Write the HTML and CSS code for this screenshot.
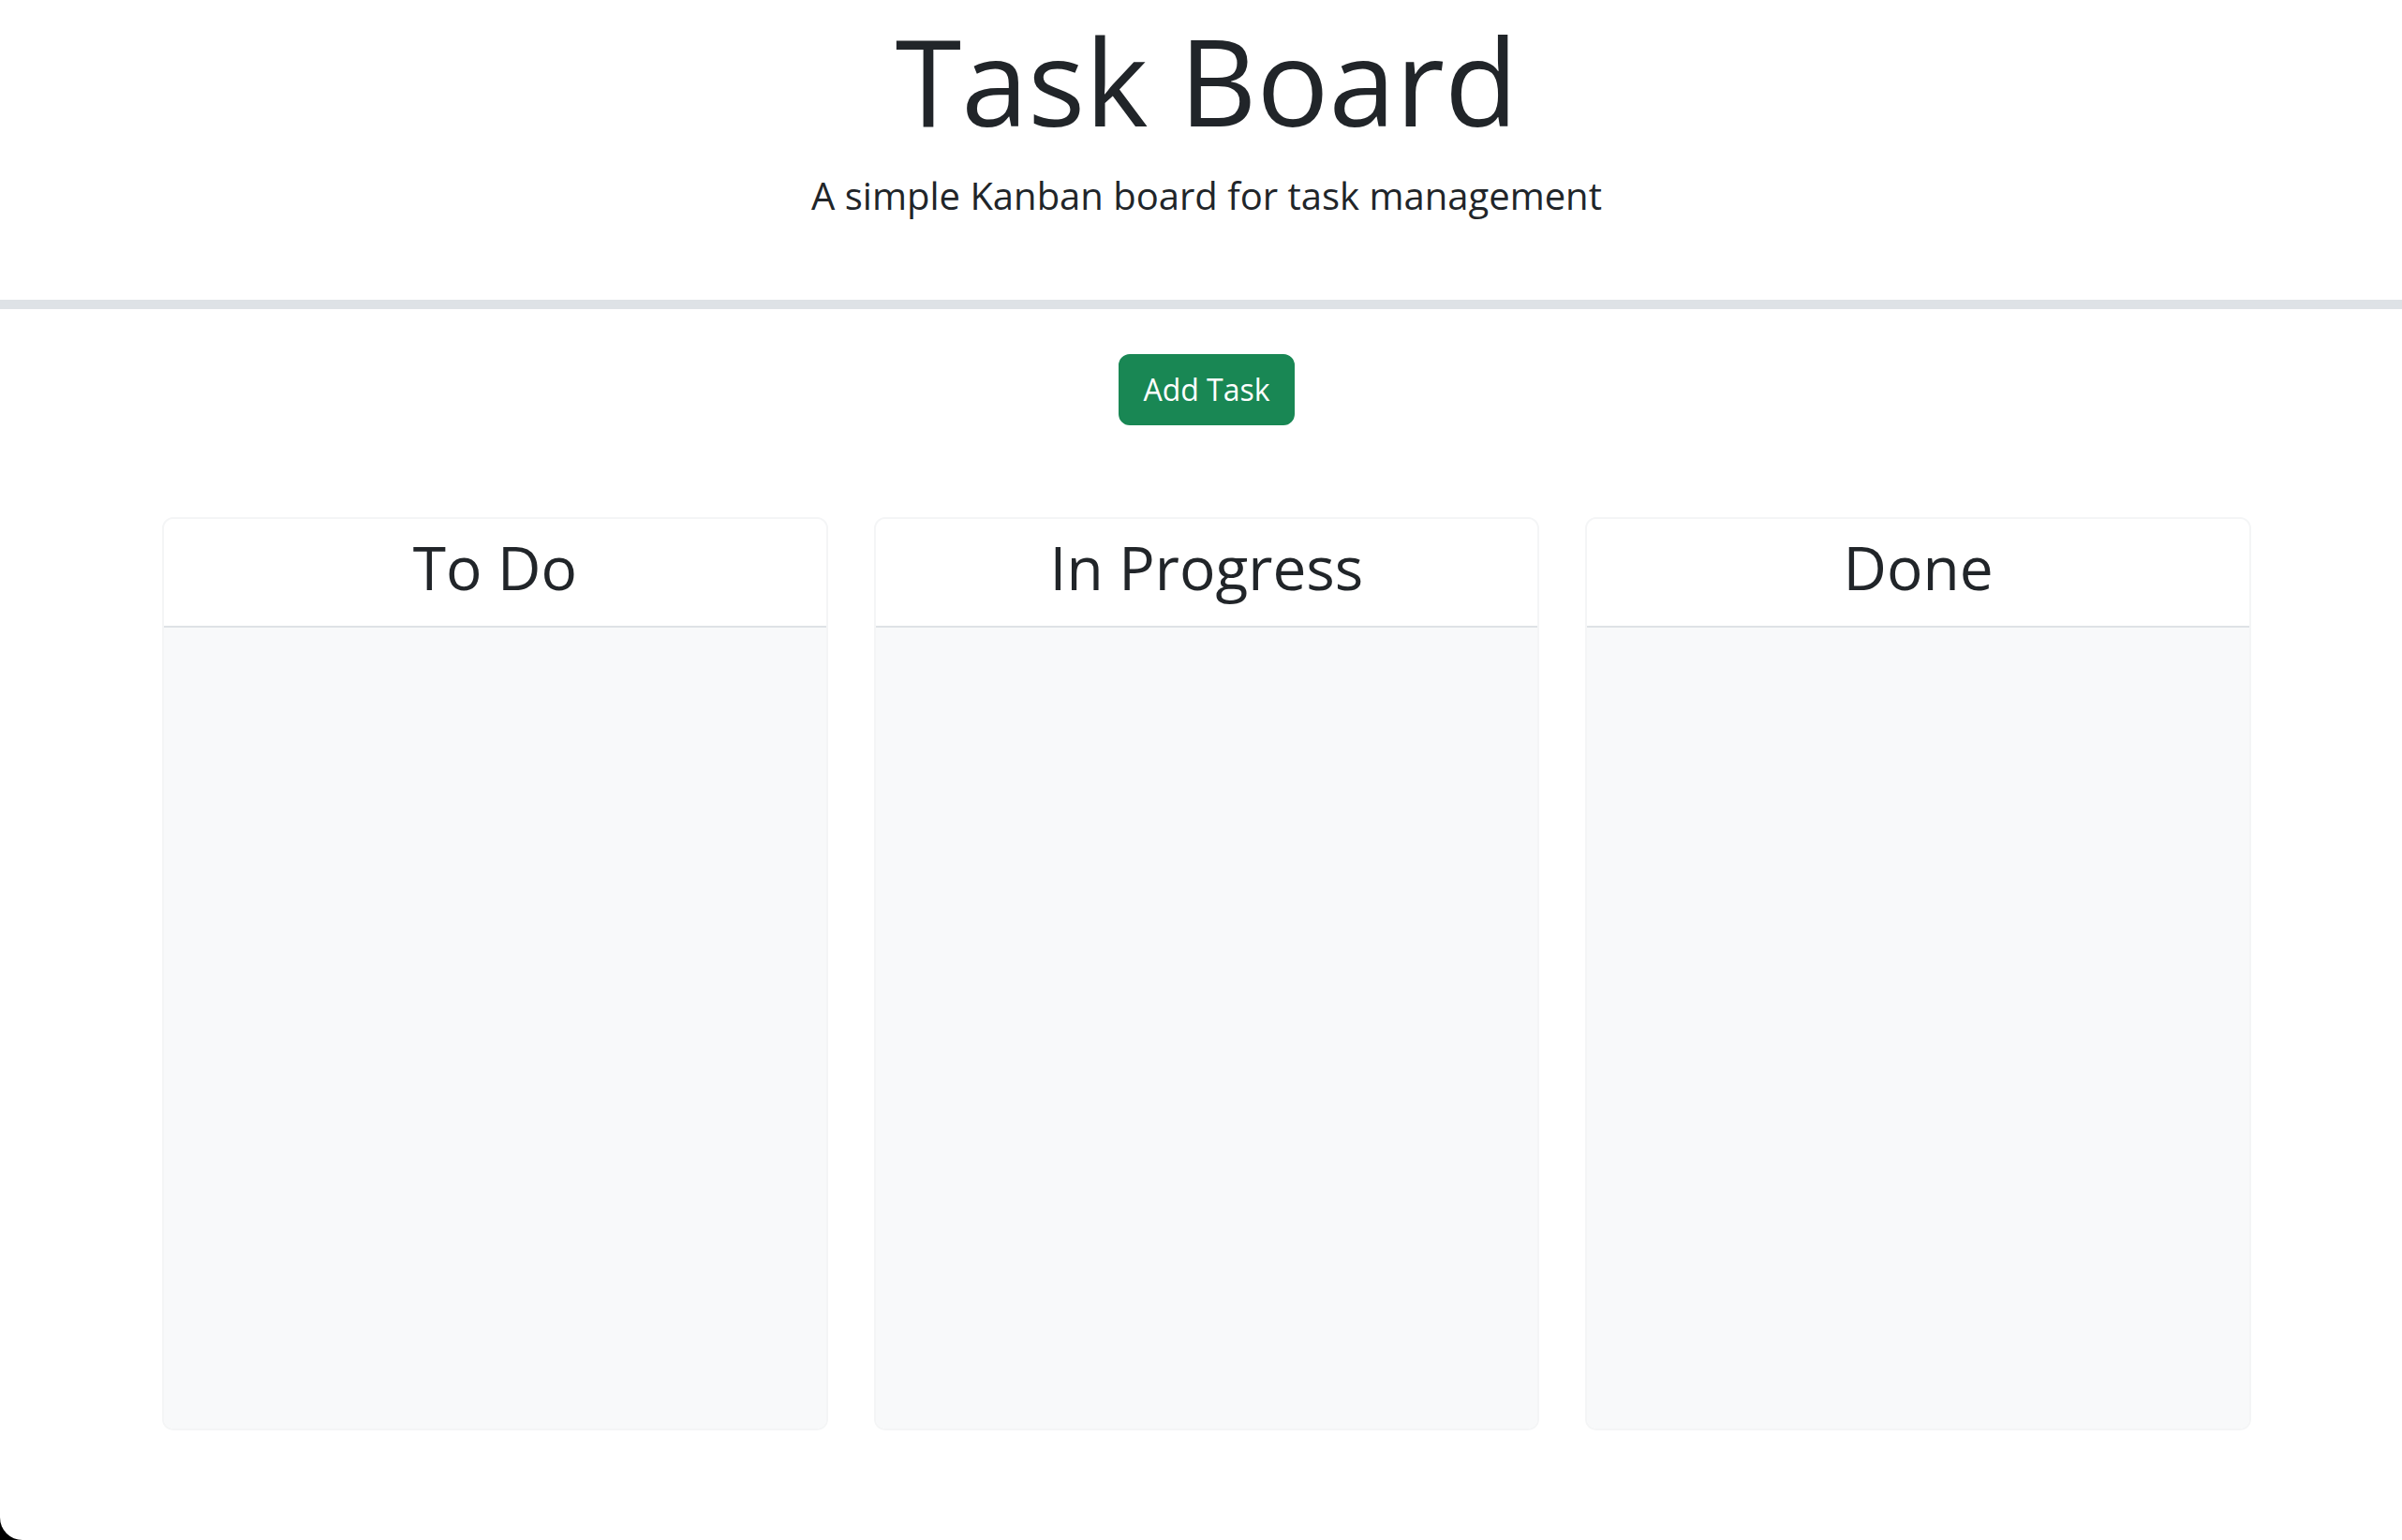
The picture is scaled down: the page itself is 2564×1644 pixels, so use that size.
FILE: index.html
```html
<!DOCTYPE html>
<html lang="en">
<head>
  <meta charset="UTF-8">
  <title>Task Board</title>
  <meta name="viewport" content="width=device-width, initial-scale=1.0">
  <link rel="stylesheet" href="styles.css">
</head>
<body>

  <header class="page-header">
    <h1>Task Board</h1>
    <p class="lead">A simple Kanban board for task management</p>
  </header>

  <main class="board-wrap">
    <div class="actions">
      <button class="btn-add" onclick="addTask()">Add Task</button>
    </div>

    <div class="board">
      <section class="column">
        <div class="column-header"><h2>To Do</h2></div>
        <div class="column-body" id="todo"></div>
      </section>
      <section class="column">
        <div class="column-header"><h2>In Progress</h2></div>
        <div class="column-body" id="progress"></div>
      </section>
      <section class="column">
        <div class="column-header"><h2>Done</h2></div>
        <div class="column-body" id="done"></div>
      </section>
    </div>
  </main>

  <script>
    function addTask() {
      const title = prompt('Task title:');
      if (!title) return;
      const card = document.createElement('div');
      card.className = 'task';
      card.textContent = title;
      document.getElementById('todo').appendChild(card);
    }
  </script>

</body>
</html>
```

FILE: styles.css
```css
:root {
  --text: #212529;
  --border: #dee2e6;
  --light: #f8f9fa;
  --success: #198754;
}

html {
  background: #000;
}

body {
  margin: 0;
  min-height: 100vh;
  background: #fff;
  color: var(--text);
  font-family: 'Open Sans', 'Liberation Sans', sans-serif;
  border-bottom-left-radius: 24px;
}

.page-header {
  text-align: center;
  padding: 9px 0 49px 12px;
  border-bottom: 10px solid var(--border);
}

.page-header h1 {
  margin: 0 0 16px;
  font-size: 128px;
  font-weight: 400;
  line-height: 1.2;
}

.lead {
  margin: 0 0 32px;
  font-size: 40px;
  font-weight: 400;
  line-height: 1.5;
}

.board-wrap {
  padding: 48px 0 0 12px;
}

.actions {
  display: flex;
  justify-content: center;
}

.btn-add {
  font-family: inherit;
  font-size: 32px;
  line-height: 1.5;
  padding: 12px 24px;
  color: #fff;
  background: var(--success);
  border: 2px solid var(--success);
  border-radius: 12px;
  cursor: pointer;
}

.btn-add:hover {
  background: #157347;
}

.board {
  width: 2230px;
  margin: 98px auto 0;
  display: grid;
  grid-template-columns: repeat(3, 1fr);
  gap: 49px;
}

.column {
  border: 2px solid #f4f5f6;
  border-radius: 12px;
  overflow: hidden;
  display: flex;
  flex-direction: column;
}

.column-header {
  background: #fff;
  text-align: center;
  padding: 14px 0 24px;
  border-bottom: 2px solid var(--border);
}

.column-header h2 {
  margin: 0;
  font-size: 64px;
  font-weight: 400;
  line-height: 1.2;
}

.column-body {
  background: var(--light);
  height: 855px;
  padding: 24px;
  box-sizing: border-box;
}

.task {
  background: #fff;
  border-radius: 8px;
  padding: 16px;
  margin-bottom: 16px;
  font-size: 32px;
}
```
